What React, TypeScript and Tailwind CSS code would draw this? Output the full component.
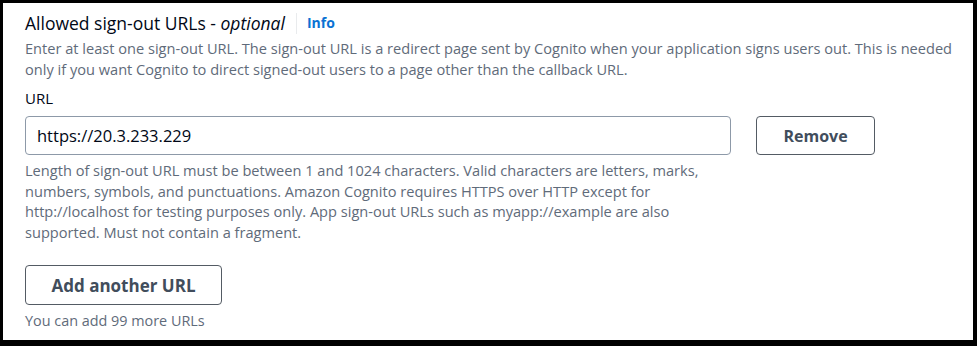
export default function App() {
  const helperLines = [
    "Length of sign-out URL must be between 1 and 1024 characters. Valid characters are letters, marks,",
    "numbers, symbols, and punctuations. Amazon Cognito requires HTTPS over HTTP except for",
    "http://localhost for testing purposes only. App sign-out URLs such as myapp://example are also",
    "supported. Must not contain a fragment.",
  ];

  return (
    <div className="box-border h-[346px] w-[977px] border-solid border-black border-t-[3px] border-l-[3px] border-r-4 border-b-[6px] bg-white font-['Open_Sans',sans-serif] text-[#000716]">
      <div className="pl-[22px] pt-[8px]">
        <div className="flex h-[24px] items-center">
          <h2 className="text-[17.5px] leading-[24px] font-normal">
            Allowed sign-out URLs - <i>optional</i>
          </h2>
          <span className="ml-[11px] h-[21px] w-px bg-[#e9ebed]" />
          <a className="ml-[10px] text-[14px] font-bold leading-[24px] text-[#0972d3]">Info</a>
        </div>
        <p className="mt-[3px] text-[14.6px] leading-[21px] text-[#5f6b7a]">
          <span className="block whitespace-nowrap">
            Enter at least one sign-out URL. The sign-out URL is a redirect page sent by Cognito when your application signs users out. This is needed
          </span>
          <span className="block whitespace-nowrap">
            only if you want Cognito to direct signed-out users to a page other than the callback URL.
          </span>
        </p>

        <label className="mt-[7px] block text-[15px] leading-[22px]">URL</label>
        <div className="mt-[7px] flex items-start">
          <div className="w-[706px]">
            <input
              className="box-border h-[39px] w-full rounded-[4px] border border-[#8d99a8] px-[11px] text-[16.5px] text-[#000716] outline-none"
              defaultValue="https://20.3.233.229"
              type="text"
            />
            <div className="mt-[5px] text-[14.6px] leading-[20.6px] text-[#5f6b7a]">
              {helperLines.map((line) => (
                <span className="block whitespace-nowrap" key={line}>
                  {line}
                </span>
              ))}
            </div>
          </div>
          <button
            className="ml-[25px] box-border h-[39px] w-[119px] rounded-[4px] border border-[#545b64] bg-white text-[16px] font-bold text-[#414d5c]"
            type="button"
          >
            Remove
          </button>
        </div>

        <button
          className="mt-[23px] box-border h-[40px] w-[197px] rounded-[4px] border border-[#545b64] bg-white text-[17px] font-bold text-[#414d5c]"
          type="button"
        >
          Add another URL
        </button>
        <p className="mt-[6px] text-[14.4px] leading-[20px] text-[#5f6b7a]">You can add 99 more URLs</p>
      </div>
    </div>
  );
}
